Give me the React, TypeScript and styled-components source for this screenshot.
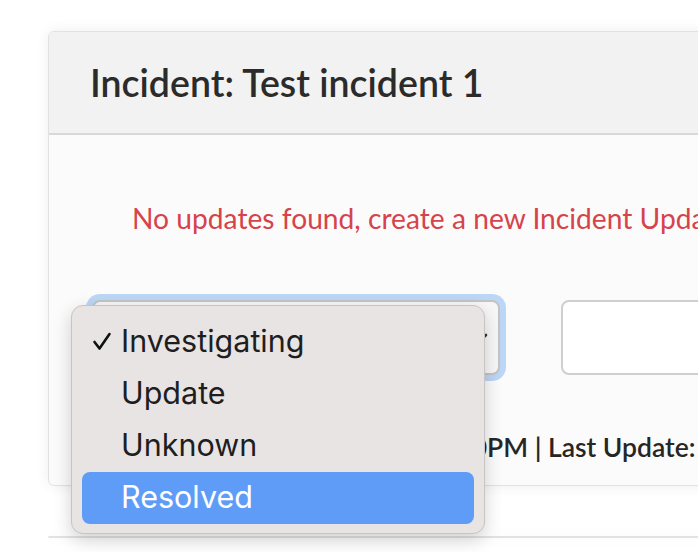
import React from "react";
import styled, { createGlobalStyle } from "styled-components";

const Global = createGlobalStyle`
  html, body { margin: 0; padding: 0; background: #ffffff; overflow: hidden; }
  body { width: 698px; height: 552px; font-family: "Lato", "Open Sans", sans-serif; }
`;

const Page = styled.div`
  position: relative;
  width: 698px;
  height: 552px;
  overflow: hidden;
  padding: 31px 0 0 48px;
  box-sizing: border-box;
  display: flex;
  flex-direction: column;
  gap: 50px;
`;

const Card = styled.section<{ $tone?: string }>`
  width: 760px;
  flex-shrink: 0;
  border: 1px solid #e2e2e2;
  border-radius: 6px;
  box-shadow: 0 0 14px rgba(0, 0, 0, 0.07);
  overflow: hidden;
  background: ${(p) => p.$tone || "#fbfbfb"};
`;

const Header = styled.header`
  height: 101px;
  background: #f2f2f2;
  border-bottom: 2px solid #d8d8d8;
  display: flex;
  align-items: center;
  padding-left: 41px;
`;

const Title = styled.h5`
  margin: 0;
  font-size: 37.5px;
  font-weight: 600;
  color: #2b2b2b;
`;

const Body = styled.div`
  height: 350px;
  padding: 0 0 0 43px;
  display: flex;
  flex-direction: column;
  box-sizing: border-box;
`;

const Alert = styled.p`
  margin: 63px 0 0 40px;
  font-size: 28.2px;
  line-height: 40px;
  color: #d6434b;
  white-space: nowrap;
`;

const FormRow = styled.div`
  margin-top: 62px;
  display: flex;
  gap: 61px;
  align-items: center;
`;

const SelectBox = styled.div`
  width: 408px;
  height: 75px;
  box-sizing: border-box;
  border: 2px solid #c4c4c4;
  border-radius: 8px;
  background: #f7f7f7;
  box-shadow: 0 0 0 6px #bcd6f6;
  display: flex;
  align-items: center;
  justify-content: flex-end;
  padding-right: 10px;
`;

const TextInput = styled.div`
  width: 200px;
  height: 75px;
  box-sizing: border-box;
  border: 2px solid #cfcfcf;
  border-radius: 8px;
  background: #ffffff;
`;

const Meta = styled.div`
  margin-top: 56px;
  font-size: 26.5px;
  font-weight: 600;
  color: #262626;
  white-space: nowrap;
`;

const Menu = styled.ul`
  position: absolute;
  left: 71px;
  top: 305px;
  width: 414px;
  height: 229px;
  box-sizing: border-box;
  margin: 0;
  padding: 10px 10px 0 10px;
  list-style: none;
  background: #e9e4e4;
  border: 1px solid #c9c4c4;
  border-radius: 12px;
  box-shadow: 0 6px 18px rgba(0, 0, 0, 0.18);
  font-family: "Inter", "Roboto", sans-serif;
  display: flex;
  flex-direction: column;
`;

const Item = styled.li<{ $active?: boolean }>`
  height: 52px;
  display: flex;
  align-items: center;
  padding-left: 10px;
  padding-bottom: 3px;
  box-sizing: border-box;
  border-radius: 8px;
  font-size: 30.5px;
  color: ${(p) => (p.$active ? "#ffffff" : "#1e1e1e")};
  background: ${(p) => (p.$active ? "#5e9cf8" : "transparent")};
`;

const CheckSlot = styled.span`
  width: 29px;
  display: flex;
  align-items: center;
`;

const Check = () => (
  <svg width="20" height="20" viewBox="0 0 20 20">
    <path d="M2.5 11 L7.5 17.5 L17.5 3" fill="none" stroke="#111" strokeWidth="2.6" strokeLinecap="round" strokeLinejoin="round" />
  </svg>
);

const Chevron = () => (
  <svg width="16" height="12" viewBox="0 0 16 12">
    <path d="M2 3 L8 9 L14 3" fill="none" stroke="#333" strokeWidth="2.6" strokeLinecap="round" />
  </svg>
);

const items = ["Investigating", "Update", "Unknown", "Resolved"];

export default function App() {
  return (
    <>
      <Global />
      <Page>
        <Card>
          <Header>
            <Title>Incident: Test incident 1</Title>
          </Header>
          <Body>
            <Alert>No updates found, create a new Incident Update</Alert>
            <FormRow>
              <SelectBox>
                <Chevron />
              </SelectBox>
              <TextInput />
            </FormRow>
            <Meta>Created: 03/21/2021 at 12:30:00PM | Last Update: 03/21/2021</Meta>
          </Body>
        </Card>
        <Card $tone="#f3f3f3" />
        <Menu>
          {items.map((it, i) => (
            <Item key={it} $active={it === "Resolved"}>
              <CheckSlot>{i === 0 ? <Check /> : null}</CheckSlot>
              {it}
            </Item>
          ))}
        </Menu>
      </Page>
    </>
  );
}
